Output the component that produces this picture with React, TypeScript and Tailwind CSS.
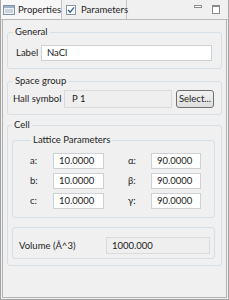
import React from 'react';

const font = "font-['Segoe_UI','Lato',sans-serif]";

function PropertiesIcon() {
  return (
    <svg width="12" height="10" viewBox="0 0 12 10" className="shrink-0">
      <rect x="0.5" y="0.5" width="11" height="9" fill="#eef2f6" stroke="#8393a6" />
      <rect x="1" y="1" width="10" height="2" fill="#9fb0c4" />
      <line x1="2" y1="5" x2="10" y2="5" stroke="#a9b6c4" />
      <line x1="2" y1="7" x2="10" y2="7" stroke="#a9b6c4" />
    </svg>
  );
}

function CheckIcon() {
  return (
    <svg width="10" height="10" viewBox="0 0 10 10" className="shrink-0">
      <rect x="0.5" y="0.5" width="9" height="9" fill="#ffffff" stroke="#8a97a6" />
      <path d="M2.2 5 L4.2 7.2 L8 2.4" fill="none" stroke="#2f5f9e" strokeWidth="1.3" />
    </svg>
  );
}

function Field({ value, disabled, className }: { value: string; disabled?: boolean; className: string }) {
  return (
    <div
      className={
        'flex items-center px-[3px] border text-[#1a1a1a] whitespace-nowrap ' +
        (disabled ? 'bg-[#efefef] border-[#dadada] ' : 'bg-white border-[#cdd0d5] ') +
        className
      }
    >
      {value}
    </div>
  );
}

export default function App() {
  const lattice = [
    ['a:', '10.0000', 'α:', '90.0000'],
    ['b:', '10.0000', 'β:', '90.0000'],
    ['c:', '10.0000', 'γ:', '90.0000'],
  ];

  return (
    <div className={`w-[229px] h-[300px] bg-[#f0f0f0] flex flex-col text-[9.5px] leading-[14px] text-[#1e1e1e] ${font}`}>
      {/* tab strip */}
      <div className="h-[20px] flex items-stretch border-b border-[#b9b9b9] border-x border-x-[#a8a8a8]">
        <div className="flex items-center gap-[3px] pl-[2px] w-[61px] bg-[#f7f7f7] border-r border-[#c4c4c4] whitespace-nowrap">
          <PropertiesIcon />
          <span>Properties</span>
        </div>
        <div className="flex items-center gap-[5px] pl-[4px] w-[65px] bg-[#f0f0f0] border-r border-[#c4c4c4] whitespace-nowrap">
          <CheckIcon />
          <span>Parameters</span>
        </div>
        <div className="flex-1 flex justify-end items-start pt-[5px] pr-[8px] gap-[10px]">
          <div className="w-[8px] h-[3px] border border-[#8c8c8c] bg-white" />
          <div className="w-[8px] h-[9px] border border-[#8c8c8c] border-t-2 bg-white" />
        </div>
      </div>

      {/* panel */}
      <div className="flex-1 border-x border-b border-[#a3a3a3] p-[1px] pt-0">
        <div className="h-full border-x border-b border-[#b3b3b3] px-[4px] pt-[5px] flex flex-col">
          {/* General */}
          <fieldset className="border border-[#d5dfe5] rounded-[3px] pl-[8px] pr-[9px] pt-[6px] pb-[7px]">
            <legend className="ml-[-3px] px-[2px]">General</legend>
            <div className="flex items-center">
              <span className="w-[25px]">Label</span>
              <Field value="NaCl" className="flex-1 h-[16px] pl-[5px]" />
            </div>
          </fieldset>

          {/* Space group */}
          <fieldset className="mt-[5px] border border-[#d5dfe5] rounded-[3px] pl-[5px] pr-[6px] pt-[2px] pb-[6px]">
            <legend className="px-[2px]">Space group</legend>
            <div className="flex items-center">
              <span className="w-[51px] whitespace-nowrap">Hall symbol</span>
              <Field value="P 1" disabled className="w-[108px] h-[18px] pl-[7px]" />
              <div className="ml-[4px] w-[38px] h-[18px] flex items-center justify-center rounded-[3px] border border-[#707070] bg-gradient-to-b from-[#f2f2f2] to-[#dddddd] whitespace-nowrap">
                Select...
              </div>
            </div>
          </fieldset>

          {/* Cell */}
          <fieldset className="mt-[3px] border border-[#d5dfe5] rounded-[3px] pl-[4px] pr-[6px] pt-[1px] pb-[6px]">
            <legend className="px-[2px]">Cell</legend>

            <fieldset className="border border-[#d5dfe5] rounded-[3px] pl-[17px] pt-[6px] pb-[8px]">
              <legend className="ml-[1px] px-[2px]">Lattice Parameters</legend>
              <div className="grid grid-cols-[23px_51px_24px_23px_50px] gap-y-[4px]">
                {lattice.map(([l1, v1, l2, v2]) => (
                  <React.Fragment key={l1}>
                    <span className="flex items-center">{l1}</span>
                    <Field value={v1} className="h-[16px] pl-[5px]" />
                    <span />
                    <span className="flex items-center">{l2}</span>
                    <Field value={v2} className="h-[16px] pl-[5px]" />
                  </React.Fragment>
                ))}
              </div>
            </fieldset>

            <div className="mt-[9px] border border-[#d5dfe5] rounded-[3px] pl-[6px] pr-[4px] pt-[9px] pb-[4px] flex items-center">
              <span className="w-[87px] whitespace-nowrap">Volume (Å^3)</span>
              <Field value="1000.000" disabled className="flex-1 h-[17px] pl-[5px]" />
            </div>
          </fieldset>
        </div>
      </div>
    </div>
  );
}
